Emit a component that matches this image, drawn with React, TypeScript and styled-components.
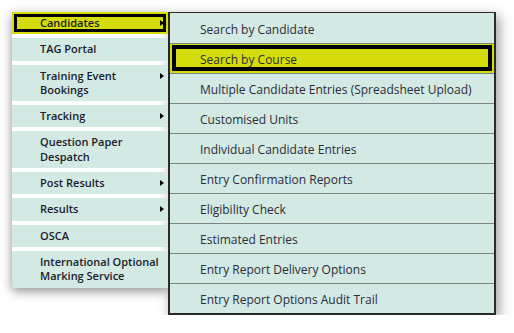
import React from "react";
import styled, { createGlobalStyle } from "styled-components";

const Global = createGlobalStyle`
  html, body { margin: 0; padding: 0; background: #ffffff; }
  body { font-family: "Open Sans", "Liberation Sans", sans-serif; }
`;

const TEAL = "#d3e9e3";
const YELLOW = "#d4dc0b";

const Page = styled.div`
  padding: 12px 0 0 12px;
  display: flex;
  align-items: flex-start;
`;

const MainMenu = styled.ul`
  list-style: none;
  margin: 0;
  padding: 0;
  width: 156px;
  display: flex;
  flex-direction: column;
  gap: 4px;
  background: #ffffff;
  box-shadow: 0 3px 10px rgba(0, 0, 0, 0.45);
`;

const MainItem = styled.li<{ $active?: boolean }>`
  position: relative;
  background: ${(p) => (p.$active ? YELLOW : TEAL)};
  padding: 4px 6px 4px 28px;
  font-size: 11px;
  line-height: 1.3;
  font-weight: 600;
  color: #1a1c2c;
  white-space: nowrap;
  outline: ${(p) => (p.$active ? "3px solid #000" : "none")};
  outline-offset: -5px;
`;

const Arrow = styled.span`
  position: absolute;
  right: 4px;
  top: 8px;
  width: 0;
  height: 0;
  border-left: 4px solid #000;
  border-top: 3px solid transparent;
  border-bottom: 3px solid transparent;
`;

const SubMenu = styled.ul`
  list-style: none;
  margin: 0;
  padding: 1px 0 0 0;
  width: 324px;
  background: ${TEAL};
  border-style: solid;
  border-color: #2a2a2a;
  border-width: 1px 2px 2px 2px;
  box-shadow: 3px 4px 12px rgba(0, 0, 0, 0.4);
`;

const SubItem = styled.li<{ $active?: boolean }>`
  height: 29px;
  line-height: 31px;
  padding-left: 30px;
  font-size: 12px;
  font-weight: 400;
  color: #2c2c3a;
  background: ${(p) => (p.$active ? YELLOW : "transparent")};
  outline: ${(p) => (p.$active ? "4px solid #000" : "none")};
  outline-offset: -6px;
  & + & {
    border-top: 1px solid #7d8583;
  }
`;

const mainItems: { label: string[]; arrow?: boolean; active?: boolean }[] = [
  { label: ["Candidates"], arrow: true, active: true },
  { label: ["TAG Portal"] },
  { label: ["Training Event", "Bookings"], arrow: true },
  { label: ["Tracking"], arrow: true },
  { label: ["Question Paper", "Despatch"] },
  { label: ["Post Results"], arrow: true },
  { label: ["Results"], arrow: true },
  { label: ["OSCA"] },
  { label: ["International Optional", "Marking Service"] },
];

const subItems = [
  "Search by Candidate",
  "Search by Course",
  "Multiple Candidate Entries (Spreadsheet Upload)",
  "Customised Units",
  "Individual Candidate Entries",
  "Entry Confirmation Reports",
  "Eligibility Check",
  "Estimated Entries",
  "Entry Report Delivery Options",
  "Entry Report Options Audit Trail",
];

export default function App() {
  return (
    <>
      <Global />
      <Page>
        <MainMenu>
          {mainItems.map((it, i) => (
            <MainItem key={i} $active={it.active}>
              {it.label.map((l, j) => (
                <React.Fragment key={j}>
                  {j > 0 && <br />}
                  {l}
                </React.Fragment>
              ))}
              {it.arrow && <Arrow />}
            </MainItem>
          ))}
        </MainMenu>
        <SubMenu>
          {subItems.map((s, i) => (
            <SubItem key={i} $active={i === 1}>
              {s}
            </SubItem>
          ))}
        </SubMenu>
      </Page>
    </>
  );
}
